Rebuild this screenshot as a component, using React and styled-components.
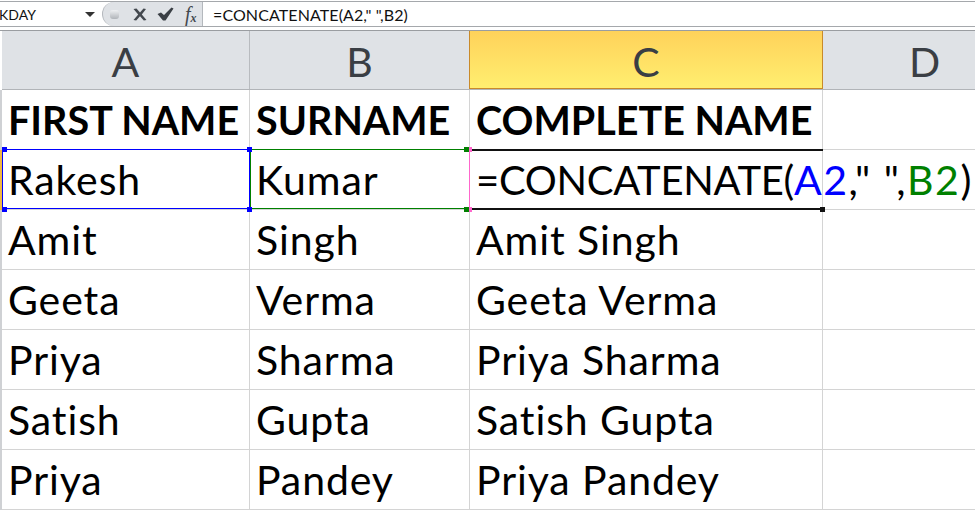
import React from "react";
import styled, { createGlobalStyle } from "styled-components";

const columns = [
  { name: "A", width: 248 },
  { name: "B", width: 220 },
  { name: "C", width: 353, active: true },
  { name: "D", width: 204 },
];

const people = [
  ["Amit", "Singh"],
  ["Geeta", "Verma"],
  ["Priya", "Sharma"],
  ["Satish", "Gupta"],
  ["Priya", "Pandey"],
];

const gridTemplate = columns.map((c) => `${c.width}px`).join(" ");

const App = () => {
  return (
    <Page>
      <GlobalStyle />
      <FormulaBar>
        <NameBox>
          <NameText>KDAY</NameText>
          <Caret />
        </NameBox>
        <ButtonsPill>
          <Grip />
          <svg width="14" height="13" viewBox="0 0 14 13">
            <path d="M0.5 1 L3.5 0.5 L7 4.5 L10.5 0.5 L13 1 L8.8 6.5 L13.5 12 L10.8 12.5 L7 8.2 L3.2 12.5 L0.5 12 L5.2 6.5 Z" fill="#43484e" />
          </svg>
          <svg width="17" height="14" viewBox="0 0 17 14">
            <path d="M0.5 7 L4 5.5 L7 8 L14.5 0.5 L16.5 1.5 L8.5 13.5 L6 13.5 Z" fill="#3a3f45" />
          </svg>
          <FxLabel>
            f<sub>x</sub>
          </FxLabel>
        </ButtonsPill>
        <FormulaInput>=CONCATENATE(A2," ",B2)</FormulaInput>
      </FormulaBar>

      <Sheet>
        <HeaderRow>
          {columns.map((c) => (
            <ColHeader key={c.name} $active={c.active}>
              {c.name}
            </ColHeader>
          ))}
        </HeaderRow>

        <Row>
          <Cell $bold>FIRST NAME</Cell>
          <Cell $bold>SURNAME</Cell>
          <Cell $bold>COMPLETE NAME</Cell>
          <Cell />
        </Row>

        <Row $active>
          <Cell>
            Rakesh
            <RangeBox $color="#0000ff" />
            <Handle $color="#0000ff" style={{ left: 0, top: -3 }} />
            <Handle $color="#0000ff" style={{ right: -3, top: -3 }} />
            <Handle $color="#0000ff" style={{ left: 0, bottom: -3 }} />
            <Handle $color="#0000ff" style={{ right: -3, bottom: -3 }} />
          </Cell>
          <Cell>
            Kumar
            <RangeBox $color="#008000" />
            <Handle $color="#008000" style={{ right: 0, top: -3 }} />
            <Handle $color="#008000" style={{ right: 0, bottom: -3 }} />
          </Cell>
          <Cell>
            <EditText>
              <FormulaHead>=CONCATENATE(</FormulaHead>
              <FormulaArgs>
                <Ref $color="#0000ff">A2</Ref>," ",<Ref $color="#008000">B2</Ref>)
              </FormulaArgs>
            </EditText>
            <EditBox />
            <Handle $color="#ff66cc" style={{ left: -1, top: -3, width: 3 }} />
            <Handle $color="#ff66cc" style={{ left: -1, bottom: -3, width: 3 }} />
            <FillHandle />
          </Cell>
          <Cell />
        </Row>

        {people.map(([first, last], i) => (
          <Row key={i}>
            <Cell>{first}</Cell>
            <Cell>{last}</Cell>
            <Cell>
              {first} {last}
            </Cell>
            <Cell />
          </Row>
        ))}
      </Sheet>
    </Page>
  );
};

const GlobalStyle = createGlobalStyle`
  html, body {
    margin: 0;
    padding: 0;
    background: #fff;
    overflow: hidden;
  }
`;

const Page = styled.div`
  width: 975px;
  height: 511px;
  overflow: hidden;
  background: #fff;
  font-family: "Lato", "Liberation Sans", sans-serif;
`;

const FormulaBar = styled.div`
  height: 26px;
  margin-top: 1px;
  border-top: 1px solid #a5a8ac;
  border-bottom: 1px solid #a5a8ac;
  display: flex;
  align-items: stretch;
  box-sizing: border-box;
`;

const NameBox = styled.div`
  width: 102px;
  display: flex;
  align-items: center;
  justify-content: space-between;
  padding-right: 7px;
  box-sizing: border-box;
`;

const NameText = styled.span`
  font-size: 14px;
  color: #111;
  margin-left: -1px;
`;

const Caret = styled.span`
  width: 0;
  height: 0;
  border-left: 5px solid transparent;
  border-right: 5px solid transparent;
  border-top: 5px solid #333;
`;

const ButtonsPill = styled.div`
  width: 101px;
  background: #dfe2e6;
  border-left: 1px solid #b4b8bd;
  border-right: 1px solid #b4b8bd;
  border-radius: 13px 0 0 13px;
  display: flex;
  align-items: center;
  gap: 10px;
  padding-left: 7px;
  box-sizing: border-box;
`;

const Grip = styled.span`
  width: 9px;
  height: 9px;
  margin-right: 4px;
  border-radius: 3px;
  background: linear-gradient(#eef0f2, #b0b4b9);
`;

const FxLabel = styled.span`
  font-family: "Liberation Serif", serif;
  font-style: italic;
  font-size: 20px;
  color: #43484e;
  line-height: 1;
  margin-left: 1px;

  sub {
    font-size: 12px;
    font-weight: 700;
    vertical-align: -1px;
  }
`;

const FormulaInput = styled.div`
  flex: 1;
  display: flex;
  align-items: center;
  padding-left: 10px;
  font-size: 16px;
  letter-spacing: 0.1px;
  color: #111;
  white-space: pre;
`;

const Sheet = styled.div`
  margin-top: 3px;
  width: 975px;
  border-top: 1px solid #9a9da1;
`;

const HeaderRow = styled.div`
  display: grid;
  grid-template-columns: ${gridTemplate};
  height: 59px;
  margin-left: 2px;
  background: #dfe2e6;
  box-sizing: border-box;
  border-bottom: 1px solid #b1b4b8;
`;

const ColHeader = styled.div`
  display: flex;
  align-items: center;
  justify-content: center;
  font-size: 41px;
  color: #3a3e44;
  border-right: 1px solid ${(p) => (p.$active ? "#c98a2a" : "#b8bbbf")};
  border-left: ${(p) => (p.$active ? "1px solid #c98a2a" : "none")};
  margin-left: ${(p) => (p.$active ? "-1px" : "0")};
  background: ${(p) => (p.$active ? "linear-gradient(#ffd25a, #ffef70)" : "transparent")};
  box-shadow: ${(p) => (p.$active ? "inset 0 -1px 0 #c98a2a" : "none")};
  padding-top: 3px;
  box-sizing: border-box;
`;

const Row = styled.div`
  display: grid;
  grid-template-columns: ${gridTemplate};
  height: 60px;
  border-left: 2px solid ${(p) => (p.$active ? "#f0b840" : "#cfd1d4")};
`;

const Cell = styled.div`
  position: relative;
  display: flex;
  align-items: center;
  box-sizing: border-box;
  padding-left: 6px;
  border-right: 1px solid #d4d4d4;
  border-bottom: 1px solid #d4d4d4;
  font-size: ${(p) => (p.$bold ? "39.5px" : "41px")};
  letter-spacing: ${(p) => (p.$bold ? "0" : "0.9px")};
  font-weight: ${(p) => (p.$bold ? 700 : 400)};
  color: #000;
  white-space: nowrap;
`;

const RangeBox = styled.span`
  position: absolute;
  inset: -1px -1px 0 0;
  border: 1px solid ${(p) => p.$color};
  pointer-events: none;
`;

const Handle = styled.span`
  position: absolute;
  width: 5px;
  height: 5px;
  background: ${(p) => p.$color};
  z-index: 2;
`;

const EditText = styled.span`
  position: relative;
  z-index: 3;
`;

const FormulaHead = styled.span`
  font-size: 40px;
  letter-spacing: -0.3px;
`;

const FormulaArgs = styled.span`
  letter-spacing: 1.5px;
`;

const Ref = styled.span`
  color: ${(p) => p.$color};
`;

const EditBox = styled.span`
  position: absolute;
  inset: -1px -1px -1px -1px;
  border-top: 2px solid #111;
  border-bottom: 2px solid #111;
  border-left: 1px solid #ff66cc;
  pointer-events: none;
`;

const FillHandle = styled.span`
  position: absolute;
  right: -3px;
  bottom: -3px;
  width: 5px;
  height: 5px;
  background: #111;
  z-index: 2;
`;

export default App;
